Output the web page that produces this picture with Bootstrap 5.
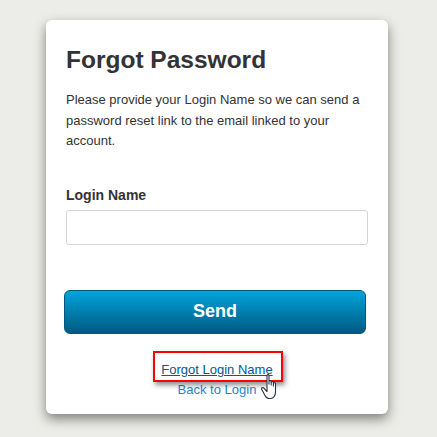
<!DOCTYPE html>
<html lang="en">
<head>
<meta charset="utf-8">
<title>Forgot Password</title>
<link href="https://cdn.jsdelivr.net/npm/bootstrap@5.3.0/dist/css/bootstrap.min.css" rel="stylesheet">
<style>
html,body{height:100%;overflow:hidden}
body{background:#ecedE8;font-family:"Liberation Sans",Arial,sans-serif;color:#333;padding:20px 49px 0 46px}
.fp-card{width:342px;height:394px;background:#fff;border-radius:6px;box-shadow:0 5px 12px rgba(40,40,30,.55);padding:25px 20px 0 20px;position:relative}
.fp-title{font-size:24.5px;font-weight:700;line-height:30px;margin:0 0 15px;color:#333}
.fp-text{font-size:13px;line-height:20.5px;margin:0 0 33px;color:#333}
.fp-label{font-size:14px;font-weight:700;line-height:20px;margin:0 0 5px;display:block;color:#333}
.fp-input{height:35px;width:302px;border:1px solid #d4d4d4;border-radius:3px;display:block;background:#fff}
.fp-btn{display:block;width:302px;height:44px;margin:45px 0 0 -2px;border:1px solid #04587c;border-radius:6px;background:linear-gradient(#02a3dc,#005a80);color:#fff;font-size:18px;font-weight:700;padding:0}
.fp-links{margin-top:26px;display:flex;flex-direction:column;align-items:center;width:302px;font-size:13px;line-height:20px}
.fp-links a{text-decoration:none;color:#1e86d0}
.fp-links a.fp-hover{color:#005a8c;text-decoration:underline;position:relative;z-index:1}
.fp-mark{position:absolute;left:107px;top:331px;width:130px;height:31px;border:2px solid #f00;box-shadow:2px 3px 5px rgba(0,0,0,.45);pointer-events:none}
.fp-hand{position:absolute;left:215px;top:354px;width:20px;height:26px;z-index:2}
</style>
</head>
<body>
<div class="fp-card">
  <h1 class="fp-title">Forgot Password</h1>
  <p class="fp-text">Please provide your Login Name so we can send a password reset link to the email linked to your account.</p>
  <form>
    <label class="fp-label" for="ln">Login Name</label>
    <input id="ln" class="fp-input" type="text">
    <button type="button" class="btn fp-btn">Send</button>
  </form>
  <div class="fp-links">
    <a class="fp-hover" href="#">Forgot Login Name</a>
    <a href="#">Back to Login</a>
  </div>
  <div class="fp-mark"></div>
  <svg class="fp-hand" viewBox="0 0 20 26" fill="#fff" stroke="#2a3040" stroke-width="1.1" stroke-linejoin="round">
    <path d="M6 1.5c0-1.3 2-1.3 2 0V10l0-2.5c0-1.2 2.2-1.2 2.2 0V11l0-2.600c0-1.200 2.200-1.200 2.200 0V12l0-2.400c0-1.200 2.100-1.200 2.100 0V18c0 3.500-2 6.500-5 6.500H8c-2 0-3.200-1.300-4-3L.8 15.500c-.7-1.500 1-2.500 2.100-1.300L6 17.500Z"/>
  </svg>
</div>
<script src="https://cdn.jsdelivr.net/npm/bootstrap@5.3.0/dist/js/bootstrap.bundle.min.js"></script>
</body>
</html>
